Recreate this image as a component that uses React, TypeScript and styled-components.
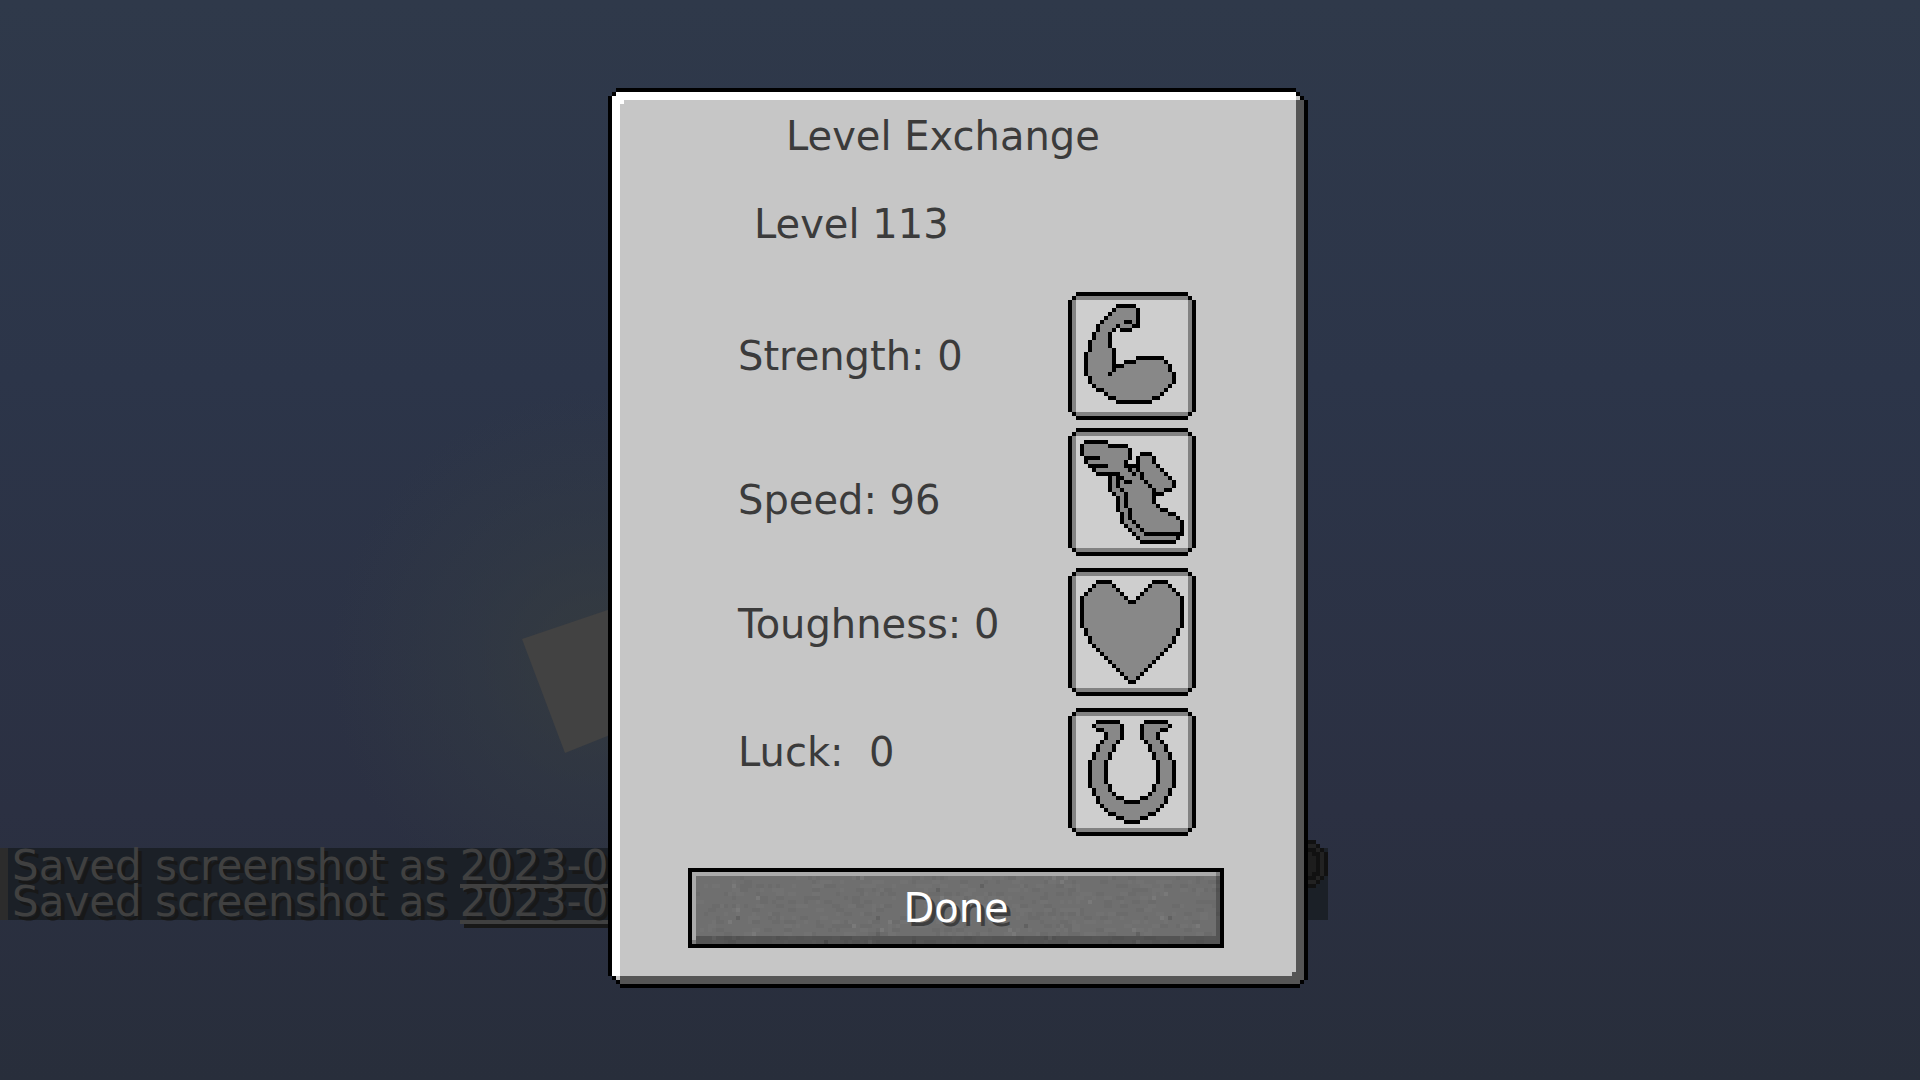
import React from "react";
import styled, { createGlobalStyle } from "styled-components";

const GlobalStyle = createGlobalStyle`
  *, *::before, *::after { box-sizing: border-box; }
  body { margin: 0; background: #2b3242; }
  h1, p, ul { margin: 0; padding: 0; font-weight: normal; }
  ul { list-style: none; }
`;

const Screen = styled.main`
  position: relative;
  isolation: isolate;
  overflow: hidden;
  min-height: 100vh;
  display: grid;
  place-items: center;
  padding: 0 4px 4px 0;
  background:
    radial-gradient(circle at 600px 660px, rgba(56, 62, 62, 0.75) 0, rgba(52, 60, 66, 0.45) 130px, rgba(48, 54, 66, 0) 270px),
    linear-gradient(180deg, #2f394a 0%, #2c3549 35%, #2b3042 75%, #282e3b 100%);
  font-family: "DejaVu Sans", Verdana, sans-serif;
  font-size: 40px;
  line-height: 48px;
  color: #3b3b3b;
`;

const Moon = styled.svg`
  position: absolute;
  z-index: -1;
  left: 520px;
  top: 600px;
  width: 120px;
  height: 160px;
`;

const Chat = styled.section`
  position: absolute;
  z-index: -1;
  left: 0;
  top: 848px;
  width: 1328px;
  padding-left: 4px;
  border-left: 8px solid #2c2c2c;
  background: #1b2027;
  color: #404040;
  text-shadow: 4px 4px 0 #181818;
`;

const ChatLine = styled.p`
  display: flex;
  height: 36px;
  padding-right: 120px;
  line-height: 36px;
  font-size: 42px;
  white-space: pre;
`;

const ChatLink = styled.a`
  flex: 1;
  height: 40px;
  color: inherit;
  text-decoration: none;
  border-bottom: 4px solid #404040;
  box-shadow: 4px 4px 0 #181818;
  clip-path: inset(0 0 -4px 0);
`;

const ChatBadge = styled.svg`
  position: absolute;
  right: 0;
  top: -8px;
  width: 24px;
  height: 48px;
`;

const Panel = styled.section`
  position: relative;
  isolation: isolate;
  width: 700px;
  padding: 24px 112px 40px 130px;
  background: #000;
  clip-path: polygon(
    8px 0, calc(100% - 12px) 0, calc(100% - 12px) 4px, calc(100% - 8px) 4px,
    calc(100% - 8px) 8px, calc(100% - 4px) 8px, calc(100% - 4px) 12px, 100% 12px,
    100% calc(100% - 8px), calc(100% - 4px) calc(100% - 8px), calc(100% - 4px) calc(100% - 4px),
    calc(100% - 8px) calc(100% - 4px), calc(100% - 8px) 100%, 12px 100%,
    12px calc(100% - 4px), 8px calc(100% - 4px), 8px calc(100% - 8px), 4px calc(100% - 8px),
    4px calc(100% - 12px), 0 calc(100% - 12px), 0 8px, 4px 8px, 4px 4px, 8px 4px
  );

  &::before {
    content: "";
    position: absolute;
    z-index: -1;
    inset: 4px;
    background:
      linear-gradient(#c6c6c6 0 0) right 4px top 4px / 4px 4px no-repeat,
      linear-gradient(#c6c6c6 0 0) left 4px bottom 4px / 4px 4px no-repeat,
      linear-gradient(#fff 0 0) left 8px top 8px / 4px 4px no-repeat,
      linear-gradient(#555 0 0) right 8px bottom 8px / 4px 4px no-repeat,
      linear-gradient(#fff 0 0) left top / calc(100% - 8px) 8px no-repeat,
      linear-gradient(#fff 0 0) left top / 8px calc(100% - 8px) no-repeat,
      linear-gradient(#555 0 0) right top / 8px 100% no-repeat,
      linear-gradient(#555 0 0) left bottom / 100% 8px no-repeat,
      #c6c6c6;
    clip-path: polygon(
      4px 0, calc(100% - 8px) 0, calc(100% - 8px) 4px, calc(100% - 4px) 4px,
      calc(100% - 4px) 8px, 100% 8px, 100% calc(100% - 4px),
      calc(100% - 4px) calc(100% - 4px), calc(100% - 4px) 100%, 8px 100%,
      8px calc(100% - 4px), 4px calc(100% - 4px), 4px calc(100% - 8px), 0 calc(100% - 8px),
      0 4px, 4px 4px
    );
  }
`;

const Title = styled.h1`
  padding-left: 48px;
  font-size: 40px;
`;

const Level = styled.p`
  padding-left: 16px;
  margin-top: 40px;
`;

const Stats = styled.ul`
  margin-top: 44px;
`;

const Stat = styled.li<{ $gap: number; $drop: number }>`
  display: flex;
  justify-content: space-between;
  align-items: flex-start;
  margin-top: ${(p) => p.$gap}px;

  & > label {
    padding-top: ${(p) => p.$drop}px;
    white-space: pre;
  }
`;

const IconButton = styled.button`
  width: 128px;
  height: 128px;
  padding: 0;
  border: 0;
  cursor: pointer;
  background:
    linear-gradient(#cecece 0 0) 8px 8px / 112px 112px no-repeat,
    linear-gradient(#828282 0 0) 4px 8px / 120px 112px no-repeat,
    linear-gradient(#828282 0 0) 8px 4px / 112px 120px no-repeat,
    #000;
  clip-path: polygon(
    8px 0, 120px 0, 120px 4px, 124px 4px, 124px 8px, 128px 8px,
    128px 120px, 124px 120px, 124px 124px, 120px 124px, 120px 128px, 8px 128px,
    8px 124px, 4px 124px, 4px 120px, 0 120px, 0 8px, 4px 8px, 4px 4px, 8px 4px
  );

  svg { display: block; }
`;

const DoneButton = styled.button`
  position: relative;
  display: block;
  width: 536px;
  height: 80px;
  margin: 32px 0 0 -50px;
  padding: 0;
  border: 4px solid #000;
  background: #6f6f6f;
  color: #fff;
  font: inherit;
  text-shadow: 4px 4px 0 #3e3e3e;
  cursor: pointer;

  svg { position: absolute; inset: 0; width: 100%; height: 100%; }
  span { position: relative; }
`;

/* A sprite lists its pixels as "row:from-to,from-to;row:..." on a 32 x 32 grid. */
type Sprite = { fill: string; line: string; mirror?: boolean };

const ARM: Sprite = {
  fill: "4:12-16;5:11-16;6:10-16;7:9-16;8:8-15;9:8-10;10:7-9;11:7-9;12:6-9;13:6-9;14:6-10;15:5-10;16:5-10;17:5-10,17-23;18:5-10,14-24;19:5-24;20:5-25;21:6-25;22:6-25;23:7-24;24:9-23;25:10-22;26:12-20",
  line: "3:12-16;4:11,17;5:10,17;6:9,17;7:8,14-15,17;8:7,12,16-17;9:7,11,13-15;10:6,10;11:6,10;12:5,10;13:5,10;14:5,11;15:4,11;16:4,11,17-23;17:4,11,14-16,24;18:4,11-13,25;19:4,11,25;20:4,10,26;21:5,26;22:5,26;23:6,25;24:7-8,24;25:9,23;26:10-11,21-22;27:12-20",
};

const SHOE: Sprite = {
  fill: "4:4-9;5:4-14;6:4-14;7:4-14,18-20;8:5-13,18-20;9:5-13,18-21;10:6-22;11:7-23;12:11-24;13:11-25;14:11-25;15:11-23;16:12-20;17:13-20;18:13-20;19:13-21;20:13-22;21:14-24;22:14-26;23:14-27;24:15-27;25:16-27;26:17-27;27:18-26",
  line: "3:4-9;4:3,10-14;5:3,15;6:3,15,18-20;7:4-7,15,17,21;8:4,14,17,21;9:5-9,14-17,22;10:6,15,17,23;11:7-12,16,18,24;12:10,12-13,18,25;13:10,12,14-15,19,26;14:10,12,20,26;15:10,13,21,24-25;16:11,14,21-23;17:12,14,21;18:12,14,21;19:12,14,22;20:12,15,23-24;21:13,15,25-26;22:13,15,27;23:13,16,28;24:14,17,28;25:15,18,28;26:16,19-28;27:17,27;28:18-26",
};

const HEART: Sprite = {
  mirror: true,
  fill: "4:7-10;5:6-11;6:5-12;7:4-13;8:4-14;9:4-15;10:4-15;11:4-15;12:4-15;13:4-15;14:4-15;15:5-15;16:5-15;17:6-15;18:6-15;19:7-15;20:8-15;21:9-15;22:10-15;23:11-15;24:12-15;25:13-15;26:14-15;27:15",
  line: "3:7-10;4:6,11;5:5,12;6:4,13;7:3,14;8:3,15;9:3;10:3;11:3;12:3;13:3;14:3;15:4;16:4;17:5;18:5;19:6;20:7;21:8;22:9;23:10;24:11;25:12;26:13;27:14;28:15",
};

const HORSESHOE: Sprite = {
  mirror: true,
  fill: "4:7-12;5:9-12;6:10-12;7:10-12;8:9-11;9:8-10;10:8-10;11:7-9;12:7-9;13:6-8;14:6-8;15:6-8;16:6-8;17:6-8;18:6-8;19:6-9;20:7-9;21:7-10;22:8-11;23:8-13;24:9-15;25:10-15;26:12-15;27:14-15",
  line: "3:7-12;4:6,13;5:7-8,13;6:9,13;7:9,13;8:8,12;9:7,11;10:7,11;11:6,10;12:6,10;13:5,9;14:5,9;15:5,9;16:5,9;17:5,9;18:5,9;19:5,10;20:6,10;21:6,11;22:7,12-13;23:7,14-15;24:8;25:9;26:10-11;27:12-13;28:14-15",
};

function toPath(rows: string, mirror?: boolean) {
  let d = "";
  for (const row of rows.split(";")) {
    const [y, runs] = row.split(":");
    for (const run of runs.split(",")) {
      const [a, b = a] = run.split("-").map(Number);
      const w = b - a + 1;
      d += `M${a} ${y}h${w}v1h-${w}z`;
      if (mirror) d += `M${31 - b} ${y}h${w}v1h-${w}z`;
    }
  }
  return d;
}

function PixelIcon({ sprite }: { sprite: Sprite }) {
  return (
    <svg width="128" height="128" viewBox="0 0 32 32" shapeRendering="crispEdges" aria-hidden="true">
      <path d={toPath(sprite.fill, sprite.mirror)} fill="#888" />
      <path d={toPath(sprite.line, sprite.mirror)} fill="#000" />
    </svg>
  );
}

/* Stone speckle for the wide button, on a grid of 4px cells. */
function StoneTexture() {
  const cols = 132;
  const rows = 18;
  let seed = 7;
  const next = () => (seed = (seed * 16807) % 2147483647) / 2147483647;
  const shades: Record<string, string> = { light: "", pale: "", dim: "", dark: "" };
  for (let y = 0; y < rows; y++) {
    for (let x = 0; x < cols; x++) {
      const n = next();
      const w = Math.min(1 + Math.floor(next() * 2), cols - x);
      const cell = `M${x} ${y}h${w}v1h-${w}z`;
      if (n < 0.12) shades.pale += cell;
      else if (n < 0.24) shades.dim += cell;
      else if (n < 0.255) shades.light += `M${x} ${y}h1v1h-1z`;
      else if (n < 0.262) shades.dark += `M${x} ${y}h1v1h-1z`;
    }
  }
  return (
    <svg viewBox="0 0 132 18" preserveAspectRatio="none" shapeRendering="crispEdges" aria-hidden="true">
      <path d={shades.pale} fill="#727272" />
      <path d={shades.dim} fill="#6b6b6b" />
      <path d={shades.light} fill="#797979" />
      <path d={shades.dark} fill="#616161" />
      <path d="M0 16h132v2H0z" fill="#000" fillOpacity="0.24" />
      <path d="M131 1h1v15h-1z" fill="#000" fillOpacity="0.24" />
      <path d="M0 0h131v1H1v16H0z" fill="#aaa" />
      <path d="M131 0h1v1h-1zM0 17h1v1H0z" fill="#808080" />
    </svg>
  );
}

const STATS = [
  { id: "strength", text: "Strength: 0", sprite: ARM, gap: 0, drop: 40 },
  { id: "speed", text: "Speed: 96", sprite: SHOE, gap: 8, drop: 48 },
  { id: "toughness", text: "Toughness: 0", sprite: HEART, gap: 12, drop: 32 },
  { id: "luck", text: "Luck:  0", sprite: HORSESHOE, gap: 12, drop: 20 },
];

const MESSAGES = [1, 2];

export default function App() {
  return (
    <>
      <GlobalStyle />
      <Screen>
        <Moon viewBox="0 0 120 160" aria-hidden="true">
          <path d="M2 39L120 -1V123L45 153z" fill="#424242" />
        </Moon>
        <Chat>
          {MESSAGES.map((m) => (
            <ChatLine key={m}>
              <span>Saved screenshot as </span>
              <ChatLink href="#">2023-0</ChatLink>
            </ChatLine>
          ))}
          <ChatBadge viewBox="0 0 6 12" shapeRendering="crispEdges" aria-hidden="true">
            <path d="M0 0h3v1h1v1h1v1h1v6h-1v1h-1v1h-1v1h-3z" fill="#111" />
            <path d="M0 1h3v1h1v1h1v6h-1v1h-1v1h-3z" fill="#222" />
            <path d="M0 2h3v1h1v6h-1v1h-3z" fill="#111" />
            <path d="M0 3h2v1h1v4h-1v1h-2z" fill="#1d1d1d" />
          </ChatBadge>
        </Chat>
        <Panel>
          <Title>Level Exchange</Title>
          <Level>Level 113</Level>
          <Stats>
            {STATS.map((s) => (
              <Stat key={s.id} $gap={s.gap} $drop={s.drop}>
                <label htmlFor={s.id}>{s.text}</label>
                <IconButton id={s.id} type="button">
                  <PixelIcon sprite={s.sprite} />
                </IconButton>
              </Stat>
            ))}
          </Stats>
          <DoneButton type="button">
            <StoneTexture />
            <span>Done</span>
          </DoneButton>
        </Panel>
      </Screen>
    </>
  );
}
